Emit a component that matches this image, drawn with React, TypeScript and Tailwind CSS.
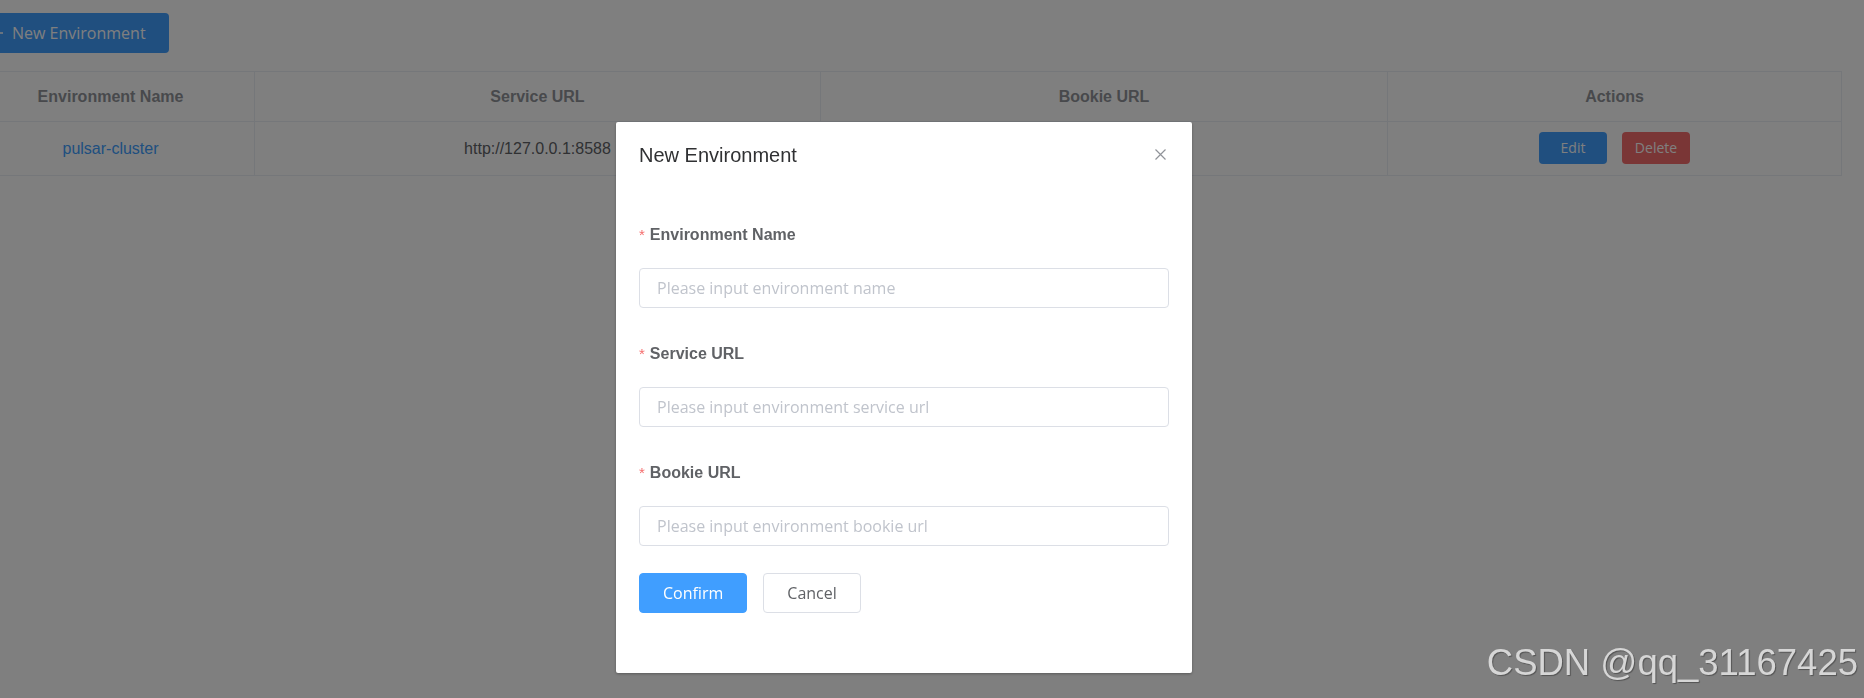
const rows = [
  {
    name: "pulsar-cluster",
    serviceUrl: "http://127.0.0.1:8588",
    bookieUrl: "http://127.0.0.1:8000",
  },
];

const fields = [
  { label: "Environment Name", placeholder: "Please input environment name" },
  { label: "Service URL", placeholder: "Please input environment service url" },
  { label: "Bookie URL", placeholder: "Please input environment bookie url" },
];

const arial = "font-['Liberation_Sans',Arial,sans-serif]";
const yahei = "font-['Open_Sans',sans-serif]";

const App = () => {
  return (
    <div className="relative min-h-[698px] w-full overflow-hidden bg-white">
      <div className="-ml-[34px] w-[1875px] pt-[13px]">
        <button
          className={`${yahei} ml-px flex h-[40px] items-center rounded-[4px] bg-[#409EFF] pl-[23px] pr-[23px] text-[16px] text-white`}
        >
          <svg width="14" height="14" viewBox="0 0 14 14" className="mr-[8px]">
            <path d="M7 1v12M1 7h12" stroke="white" strokeWidth="1.4" />
          </svg>
          New Environment
        </button>

        <table
          className={`${arial} mt-[18px] w-[1875px] table-fixed border-collapse border border-[#EBEEF5] text-[16px]`}
        >
          <colgroup>
            <col className="w-[288px]" />
            <col className="w-[566px]" />
            <col className="w-[567px]" />
            <col className="w-[454px]" />
          </colgroup>
          <thead>
            <tr className="h-[50px]">
              <th className="border border-[#EBEEF5] font-bold text-[#909399]">Environment Name</th>
              <th className="border border-[#EBEEF5] font-bold text-[#909399]">Service URL</th>
              <th className="border border-[#EBEEF5] font-bold text-[#909399]">Bookie URL</th>
              <th className="border border-[#EBEEF5] font-bold text-[#909399]">Actions</th>
            </tr>
          </thead>
          <tbody>
            {rows.map((row) => (
              <tr key={row.name} className="h-[54px]">
                <td className="border border-[#EBEEF5] text-center text-[#409EFF]">{row.name}</td>
                <td className="border border-[#EBEEF5] text-center text-[#606266]">{row.serviceUrl}</td>
                <td className="border border-[#EBEEF5] text-center text-[#606266]">{row.bookieUrl}</td>
                <td className="border border-[#EBEEF5] text-center">
                  <div className={`${yahei} flex justify-center gap-[15px] pb-[2px]`}>
                    <button className="h-[32px] w-[68px] rounded-[4px] bg-[#409EFF] text-[14px] text-white">
                      Edit
                    </button>
                    <button className="h-[32px] w-[68px] rounded-[4px] bg-[#F56C6C] text-[14px] text-white">
                      Delete
                    </button>
                  </div>
                </td>
              </tr>
            ))}
          </tbody>
        </table>
      </div>

      {/* dim layer */}
      <div className="fixed inset-0 bg-black/50" />

      {/* dialog */}
      <div className="fixed left-[616px] top-[122px] w-[576px] rounded-[2px] bg-white px-[23px] pb-[60px] shadow-[0_1px_3px_rgba(0,0,0,0.3)]">
        <div className="relative pt-[21px]">
          <h3 className={`${arial} text-[20px] leading-[24px] text-[#303133]`}>New Environment</h3>
          <button className="absolute right-[3px] top-[27px]">
            <svg width="11" height="11" viewBox="0 0 11 11">
              <path d="M0.5 0.5l10 10M10.5 0.5l-10 10" stroke="#909399" strokeWidth="1.2" />
            </svg>
          </button>
        </div>

        <form className="mt-[48px]" onSubmit={(e) => e.preventDefault()}>
          {fields.map((f) => (
            <div key={f.label} className="mb-[26px]">
              <label className={`${arial} flex h-[40px] items-center text-[16px] font-bold text-[#606266]`}>
                <span className="mr-[5px] text-[15px] font-normal text-[#F56C6C]">*</span>
                {f.label}
              </label>
              <input
                className={`${yahei} mt-[13px] block h-[40px] w-full rounded-[4px] border border-[#DCDFE6] bg-white px-[17px] text-[16px] text-[#606266] outline-none placeholder:text-[#C0C4CC]`}
                placeholder={f.placeholder}
              />
            </div>
          ))}
          <div className={`${yahei} mt-[27px] flex gap-[16px] text-[16px]`}>
            <button className="h-[40px] rounded-[4px] border border-[#409EFF] bg-[#409EFF] px-[23px] text-white">
              Confirm
            </button>
            <button className="h-[40px] rounded-[4px] border border-[#DCDFE6] bg-white px-[23px] text-[#606266]">
              Cancel
            </button>
          </div>
        </form>
      </div>

      {/* watermark */}
      <div
        className={`${arial} fixed right-[6px] top-[642px] text-[36.5px] leading-[42px] text-[#d6d6d6] [text-shadow:1px_1px_1px_rgba(0,0,0,0.35)]`}
      >
        CSDN @qq_31167425
      </div>
    </div>
  );
};

export default App;
